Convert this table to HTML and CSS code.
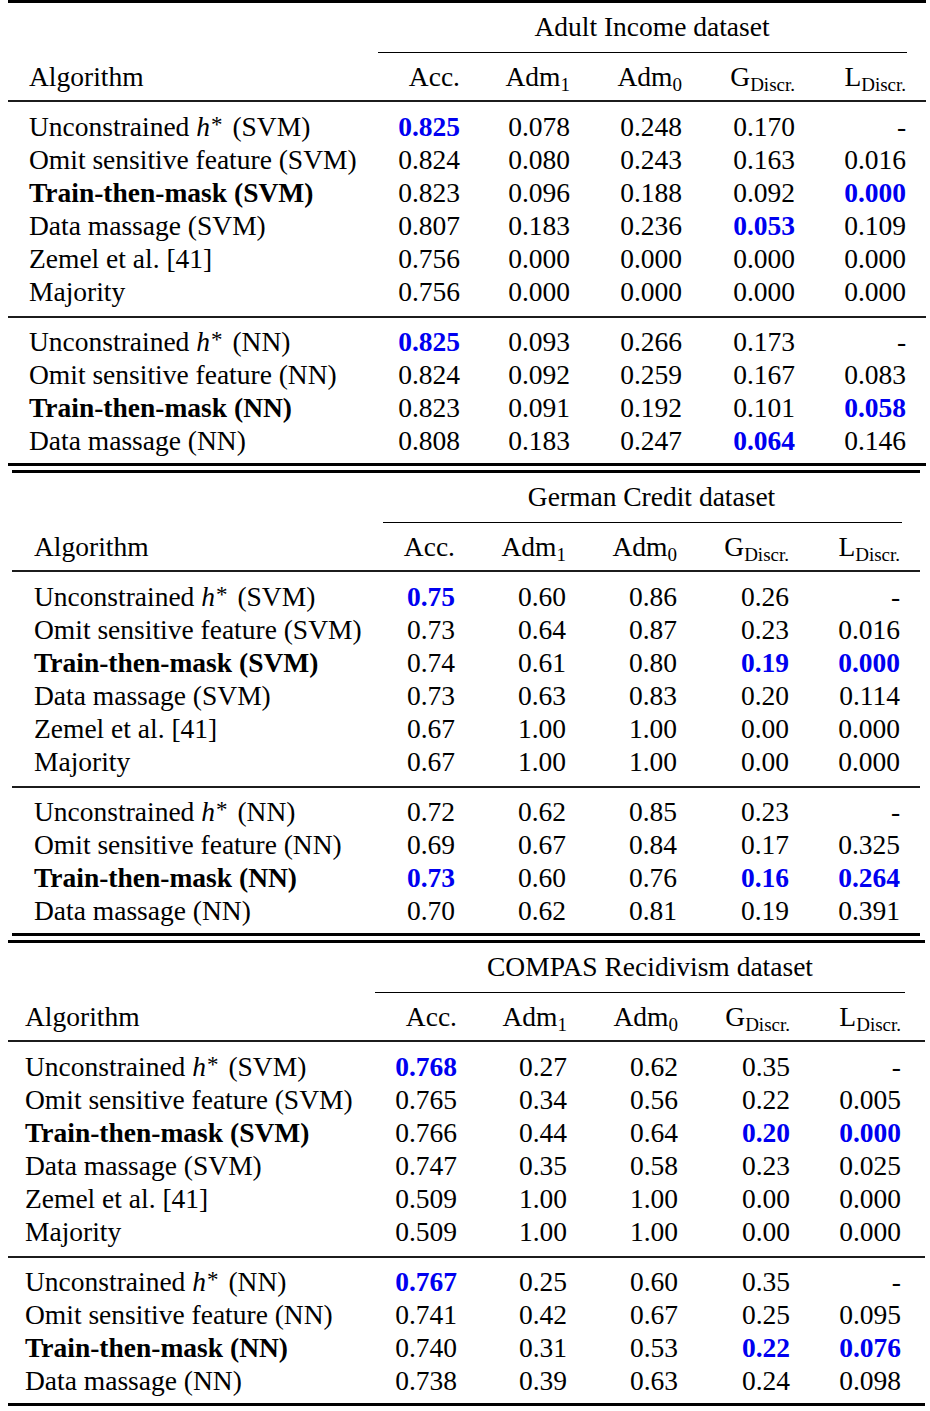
FILE: index.html
```html
<!DOCTYPE html>
<html lang="en">
<head>
<meta charset="utf-8">
<title>Results tables</title>
<link rel="stylesheet" href="styles.css">
</head>
<body>
<main class="page">

<table class="res t1">
  <colgroup>
    <col class="c-alg"><col class="c-acc"><col class="c-a1"><col class="c-a0"><col class="c-g"><col class="c-l">
  </colgroup>
  <thead>
    <tr class="title">
      <th class="alg"></th>
      <th class="ds" colspan="5"><div class="ds-name">Adult Income dataset</div><div class="cmid"></div></th>
    </tr>
    <tr class="head">
      <th class="alg">Algorithm</th>
      <th class="num">Acc.</th>
      <th class="num">Adm<span class="sub">1</span></th>
      <th class="num">Adm<span class="sub">0</span></th>
      <th class="num">G<span class="sub">Discr.</span></th>
      <th class="num last">L<span class="sub">Discr.</span></th>
    </tr>
  </thead>
  <tbody>
    <tr><td class="alg">Unconstrained <i class="var">h</i><sup class="star">*</sup> (SVM)</td><td class="num"><b class="best">0.825</b></td><td class="num">0.078</td><td class="num">0.248</td><td class="num">0.170</td><td class="num last">-</td></tr>
    <tr><td class="alg">Omit sensitive feature (SVM)</td><td class="num">0.824</td><td class="num">0.080</td><td class="num">0.243</td><td class="num">0.163</td><td class="num last">0.016</td></tr>
    <tr><td class="alg"><b>Train-then-mask (SVM)</b></td><td class="num">0.823</td><td class="num">0.096</td><td class="num">0.188</td><td class="num">0.092</td><td class="num last"><b class="best">0.000</b></td></tr>
    <tr><td class="alg">Data massage (SVM)</td><td class="num">0.807</td><td class="num">0.183</td><td class="num">0.236</td><td class="num"><b class="best">0.053</b></td><td class="num last">0.109</td></tr>
    <tr><td class="alg">Zemel et al. [41]</td><td class="num">0.756</td><td class="num">0.000</td><td class="num">0.000</td><td class="num">0.000</td><td class="num last">0.000</td></tr>
    <tr><td class="alg">Majority</td><td class="num">0.756</td><td class="num">0.000</td><td class="num">0.000</td><td class="num">0.000</td><td class="num last">0.000</td></tr>
  </tbody>
  <tbody>
    <tr><td class="alg">Unconstrained <i class="var">h</i><sup class="star">*</sup> (NN)</td><td class="num"><b class="best">0.825</b></td><td class="num">0.093</td><td class="num">0.266</td><td class="num">0.173</td><td class="num last">-</td></tr>
    <tr><td class="alg">Omit sensitive feature (NN)</td><td class="num">0.824</td><td class="num">0.092</td><td class="num">0.259</td><td class="num">0.167</td><td class="num last">0.083</td></tr>
    <tr><td class="alg"><b>Train-then-mask (NN)</b></td><td class="num">0.823</td><td class="num">0.091</td><td class="num">0.192</td><td class="num">0.101</td><td class="num last"><b class="best">0.058</b></td></tr>
    <tr><td class="alg">Data massage (NN)</td><td class="num">0.808</td><td class="num">0.183</td><td class="num">0.247</td><td class="num"><b class="best">0.064</b></td><td class="num last">0.146</td></tr>
  </tbody>
</table>

<table class="res t2">
  <colgroup>
    <col class="c-alg"><col class="c-acc"><col class="c-a1"><col class="c-a0"><col class="c-g"><col class="c-l">
  </colgroup>
  <thead>
    <tr class="title">
      <th class="alg"></th>
      <th class="ds" colspan="5"><div class="ds-name">German Credit dataset</div><div class="cmid"></div></th>
    </tr>
    <tr class="head">
      <th class="alg">Algorithm</th>
      <th class="num">Acc.</th>
      <th class="num">Adm<span class="sub">1</span></th>
      <th class="num">Adm<span class="sub">0</span></th>
      <th class="num">G<span class="sub">Discr.</span></th>
      <th class="num last">L<span class="sub">Discr.</span></th>
    </tr>
  </thead>
  <tbody>
    <tr><td class="alg">Unconstrained <i class="var">h</i><sup class="star">*</sup> (SVM)</td><td class="num"><b class="best">0.75</b></td><td class="num">0.60</td><td class="num">0.86</td><td class="num">0.26</td><td class="num last">-</td></tr>
    <tr><td class="alg">Omit sensitive feature (SVM)</td><td class="num">0.73</td><td class="num">0.64</td><td class="num">0.87</td><td class="num">0.23</td><td class="num last">0.016</td></tr>
    <tr><td class="alg"><b>Train-then-mask (SVM)</b></td><td class="num">0.74</td><td class="num">0.61</td><td class="num">0.80</td><td class="num"><b class="best">0.19</b></td><td class="num last"><b class="best">0.000</b></td></tr>
    <tr><td class="alg">Data massage (SVM)</td><td class="num">0.73</td><td class="num">0.63</td><td class="num">0.83</td><td class="num">0.20</td><td class="num last">0.114</td></tr>
    <tr><td class="alg">Zemel et al. [41]</td><td class="num">0.67</td><td class="num">1.00</td><td class="num">1.00</td><td class="num">0.00</td><td class="num last">0.000</td></tr>
    <tr><td class="alg">Majority</td><td class="num">0.67</td><td class="num">1.00</td><td class="num">1.00</td><td class="num">0.00</td><td class="num last">0.000</td></tr>
  </tbody>
  <tbody>
    <tr><td class="alg">Unconstrained <i class="var">h</i><sup class="star">*</sup> (NN)</td><td class="num">0.72</td><td class="num">0.62</td><td class="num">0.85</td><td class="num">0.23</td><td class="num last">-</td></tr>
    <tr><td class="alg">Omit sensitive feature (NN)</td><td class="num">0.69</td><td class="num">0.67</td><td class="num">0.84</td><td class="num">0.17</td><td class="num last">0.325</td></tr>
    <tr><td class="alg"><b>Train-then-mask (NN)</b></td><td class="num"><b class="best">0.73</b></td><td class="num">0.60</td><td class="num">0.76</td><td class="num"><b class="best">0.16</b></td><td class="num last"><b class="best">0.264</b></td></tr>
    <tr><td class="alg">Data massage (NN)</td><td class="num">0.70</td><td class="num">0.62</td><td class="num">0.81</td><td class="num">0.19</td><td class="num last">0.391</td></tr>
  </tbody>
</table>

<table class="res t3">
  <colgroup>
    <col class="c-alg"><col class="c-acc"><col class="c-a1"><col class="c-a0"><col class="c-g"><col class="c-l">
  </colgroup>
  <thead>
    <tr class="title">
      <th class="alg"></th>
      <th class="ds" colspan="5"><div class="ds-name">COMPAS Recidivism dataset</div><div class="cmid"></div></th>
    </tr>
    <tr class="head">
      <th class="alg">Algorithm</th>
      <th class="num">Acc.</th>
      <th class="num">Adm<span class="sub">1</span></th>
      <th class="num">Adm<span class="sub">0</span></th>
      <th class="num">G<span class="sub">Discr.</span></th>
      <th class="num last">L<span class="sub">Discr.</span></th>
    </tr>
  </thead>
  <tbody>
    <tr><td class="alg">Unconstrained <i class="var">h</i><sup class="star">*</sup> (SVM)</td><td class="num"><b class="best">0.768</b></td><td class="num">0.27</td><td class="num">0.62</td><td class="num">0.35</td><td class="num last">-</td></tr>
    <tr><td class="alg">Omit sensitive feature (SVM)</td><td class="num">0.765</td><td class="num">0.34</td><td class="num">0.56</td><td class="num">0.22</td><td class="num last">0.005</td></tr>
    <tr><td class="alg"><b>Train-then-mask (SVM)</b></td><td class="num">0.766</td><td class="num">0.44</td><td class="num">0.64</td><td class="num"><b class="best">0.20</b></td><td class="num last"><b class="best">0.000</b></td></tr>
    <tr><td class="alg">Data massage (SVM)</td><td class="num">0.747</td><td class="num">0.35</td><td class="num">0.58</td><td class="num">0.23</td><td class="num last">0.025</td></tr>
    <tr><td class="alg">Zemel et al. [41]</td><td class="num">0.509</td><td class="num">1.00</td><td class="num">1.00</td><td class="num">0.00</td><td class="num last">0.000</td></tr>
    <tr><td class="alg">Majority</td><td class="num">0.509</td><td class="num">1.00</td><td class="num">1.00</td><td class="num">0.00</td><td class="num last">0.000</td></tr>
  </tbody>
  <tbody>
    <tr><td class="alg">Unconstrained <i class="var">h</i><sup class="star">*</sup> (NN)</td><td class="num"><b class="best">0.767</b></td><td class="num">0.25</td><td class="num">0.60</td><td class="num">0.35</td><td class="num last">-</td></tr>
    <tr><td class="alg">Omit sensitive feature (NN)</td><td class="num">0.741</td><td class="num">0.42</td><td class="num">0.67</td><td class="num">0.25</td><td class="num last">0.095</td></tr>
    <tr><td class="alg"><b>Train-then-mask (NN)</b></td><td class="num">0.740</td><td class="num">0.31</td><td class="num">0.53</td><td class="num"><b class="best">0.22</b></td><td class="num last"><b class="best">0.076</b></td></tr>
    <tr><td class="alg">Data massage (NN)</td><td class="num">0.738</td><td class="num">0.39</td><td class="num">0.63</td><td class="num">0.24</td><td class="num last">0.098</td></tr>
  </tbody>
</table>

</main>
</body>
</html>
```

FILE: styles.css
```css
html, body {
  margin: 0;
  padding: 0;
  background: #ffffff;
}

body {
  font-family: "Liberation Serif", "Times New Roman", serif;
  font-size: 27.5px;
  color: #000000;
}

.page {
  display: flex;
  flex-direction: column;
  align-items: flex-start;
}

.res {
  table-layout: fixed;
  border-collapse: separate;
  border-spacing: 0;
  border-top: 3px solid #000;
  border-bottom: 3px solid #000;
}

.res th,
.res td {
  padding: 0;
  line-height: 33px;
  font-weight: normal;
  white-space: nowrap;
  vertical-align: top;
}

.res .alg { text-align: left; }
.res .num { text-align: right; }

/* title row with dataset name and cmidrule */
.res .ds { text-align: center; }
.ds-name {
  padding: 7px 0 9px;
}
.cmid {
  height: 0;
  border-top: 1px solid #000;
}

/* header row */
.res .head th {
  padding-top: 7px;
  padding-bottom: 7px;
  border-bottom: 2px solid #1c1c1c;
}

.sub {
  font-size: 19px;
  line-height: 0;
  vertical-align: -5px;
}

.var {
  font-style: italic;
  margin-right: 1px;
}

.star {
  font-size: 23px;
  line-height: 0;
  vertical-align: 4px;
  margin-right: 3px;
}

.best {
  color: #0000f0;
  font-weight: bold;
}

b { font-weight: bold; }

/* body groups */
.res tbody tr:first-child td { padding-top: 8px; }
.res tbody tr:last-child td { padding-bottom: 8px; }
.res tbody + tbody tr:first-child td {
  border-top: 2px solid #1c1c1c;
  padding-top: 7px;
}
.res tbody:last-child tr:last-child td { padding-bottom: 6px; }

/* table 1 */
.t1 { width: 918px; margin: 0 0 0 8px; }
.t1 .c-alg { width: 370px; }
.t1 .c-acc { width: 82px; }
.t1 .c-a1 { width: 110px; }
.t1 .c-a0 { width: 112px; }
.t1 .c-g { width: 113px; }
.t1 .c-l { width: 131px; }
.t1 .alg { padding-left: 21px; }
.t1 .last { padding-right: 20px; }
.t1 .cmid { margin-right: 19px; }

/* table 2 */
.t2 { width: 908px; margin: 4px 0 0 12px; }
.t2 .c-alg { width: 371px; }
.t2 .c-acc { width: 72px; }
.t2 .c-a1 { width: 111px; }
.t2 .c-a0 { width: 111px; }
.t2 .c-g { width: 112px; }
.t2 .c-l { width: 131px; }
.t2 .alg { padding-left: 22px; }
.t2 .last { padding-right: 20px; }
.t2 .cmid { margin-right: 18px; }

/* table 3 */
.t3 { width: 917px; margin: 4px 0 0 8px; }
.t3 .c-alg { width: 367px; }
.t3 .c-acc { width: 82px; }
.t3 .c-a1 { width: 110px; }
.t3 .c-a0 { width: 111px; }
.t3 .c-g { width: 112px; }
.t3 .c-l { width: 135px; }
.t3 .alg { padding-left: 17px; }
.t3 .last { padding-right: 24px; }
.t3 .cmid { margin-right: 20px; }
```
